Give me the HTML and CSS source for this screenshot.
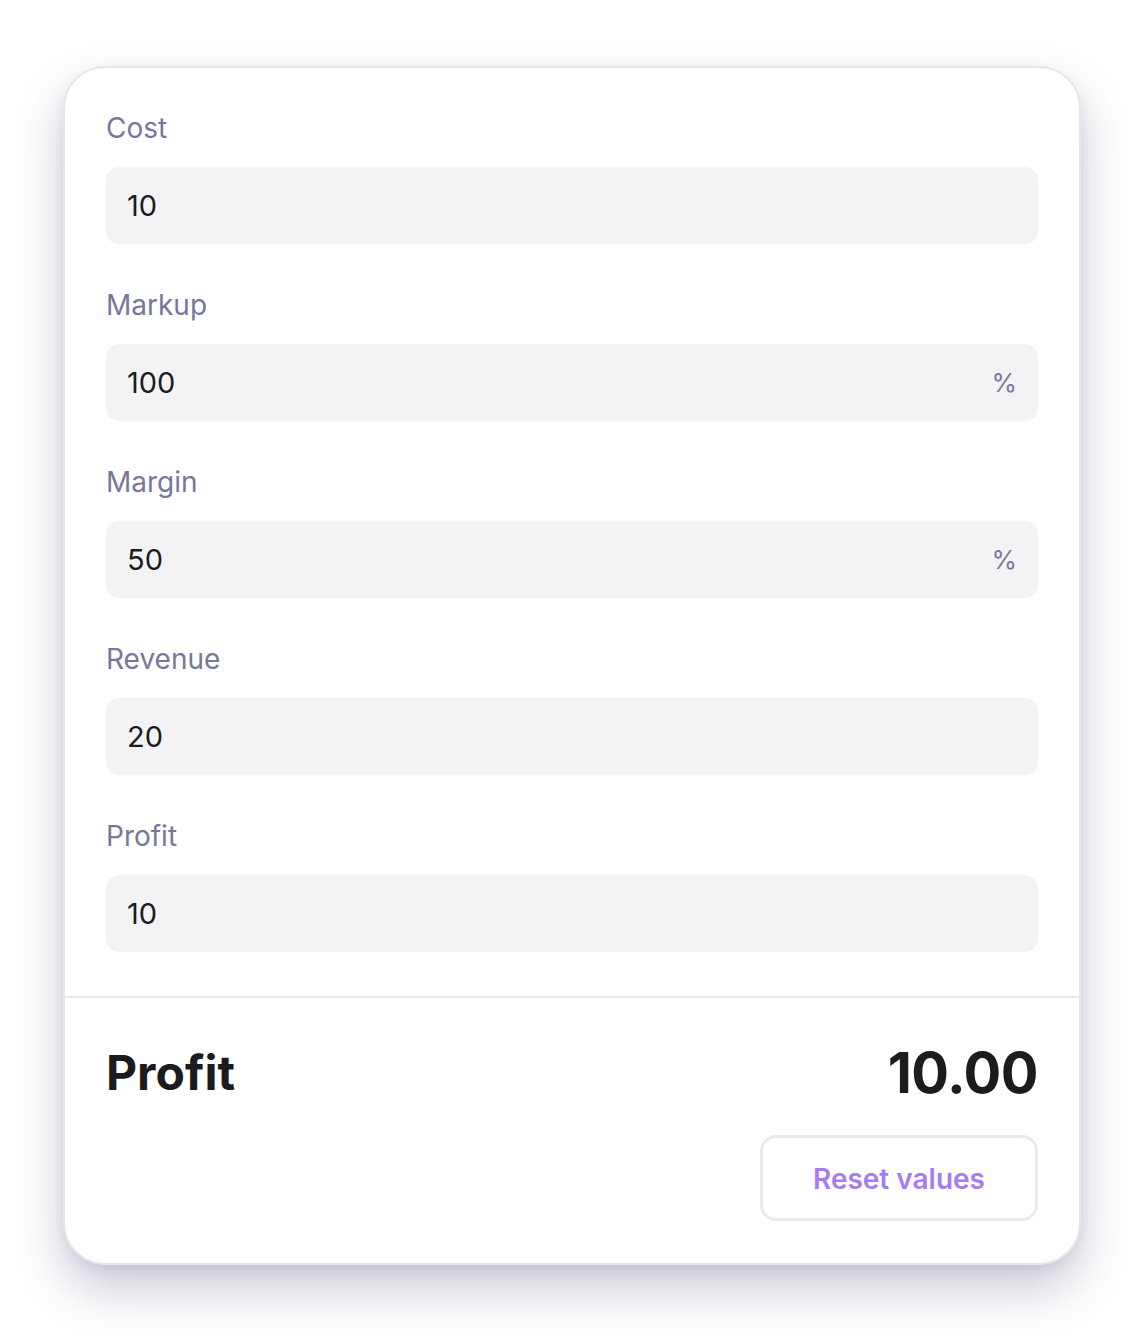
FILE: index.html
```html
<!DOCTYPE html>
<html lang="en">
<head>
<meta charset="utf-8">
<title>Profit calculator</title>
<link rel="stylesheet" href="styles.css">
</head>
<body>
<main class="page">
  <section class="card">
    <div class="fields">
      <div class="field">
        <label class="label">Cost</label>
        <div class="input"><span class="value">10</span></div>
      </div>
      <div class="field">
        <label class="label">Markup</label>
        <div class="input"><span class="value">100</span><span class="suffix">%</span></div>
      </div>
      <div class="field">
        <label class="label">Margin</label>
        <div class="input"><span class="value">50</span><span class="suffix">%</span></div>
      </div>
      <div class="field">
        <label class="label">Revenue</label>
        <div class="input"><span class="value">20</span></div>
      </div>
      <div class="field">
        <label class="label">Profit</label>
        <div class="input"><span class="value">10</span></div>
      </div>
    </div>
    <div class="footer">
      <div class="result">
        <h2 class="result-title">Profit</h2>
        <div class="result-value">10.00</div>
      </div>
      <div class="actions">
        <button class="reset" type="button">Reset values</button>
      </div>
    </div>
  </section>
</main>
</body>
</html>
```

FILE: styles.css
```css
* { box-sizing: border-box; }
html, body { margin: 0; padding: 0; background: #ffffff; }
body {
  font-family: Inter, "Noto Sans", "Liberation Sans", sans-serif;
  color: #1c1c1e;
}
.page {
  padding: 66px 63px 80px 63px;
}
.card {
  background: #ffffff;
  border: 2px solid #e6e6ec;
  border-radius: 42px;
  box-shadow: 0 24px 48px rgba(50, 50, 100, 0.26), 0 4px 12px rgba(50, 50, 100, 0.08);
}
.fields {
  display: flex;
  flex-direction: column;
  gap: 40px;
  padding: 39px 41px 44px 41px;
}
.field {
  display: flex;
  flex-direction: column;
  gap: 18px;
}
.label {
  font-size: 28px;
  line-height: 42px;
  color: #77779a;
}
.input {
  height: 77px;
  background: #f3f3f5;
  border-radius: 13px;
  display: flex;
  align-items: center;
  justify-content: space-between;
  padding: 0 21px 0 21px;
  font-size: 29px;
}
.value { color: #1c1c1e; }
.suffix { color: #7a7a9c; font-size: 26px; }
.footer {
  border-top: 2px solid #e6e6ec;
  padding: 47px 41px 42px 41px;
  display: flex;
  flex-direction: column;
  gap: 34px;
}
.result {
  display: flex;
  justify-content: space-between;
  align-items: center;
  height: 56px;
}
.result-title {
  margin: 0;
  font-size: 48px;
  font-weight: 700;
  line-height: 56px;
  color: #1c1c1e;
}
.result-value {
  font-size: 56px;
  font-weight: 700;
  line-height: 56px;
  letter-spacing: -0.5px;
  color: #1c1c1e;
}
.actions {
  display: flex;
  justify-content: flex-end;
}
.reset {
  width: 278px;
  height: 86px;
  border: 3px solid #e8e8ee;
  border-radius: 16px;
  background: #ffffff;
  color: #a67cf6;
  font-family: inherit;
  font-size: 28px;
  font-weight: 600;
  padding: 2px 0 0 0;
}
```
